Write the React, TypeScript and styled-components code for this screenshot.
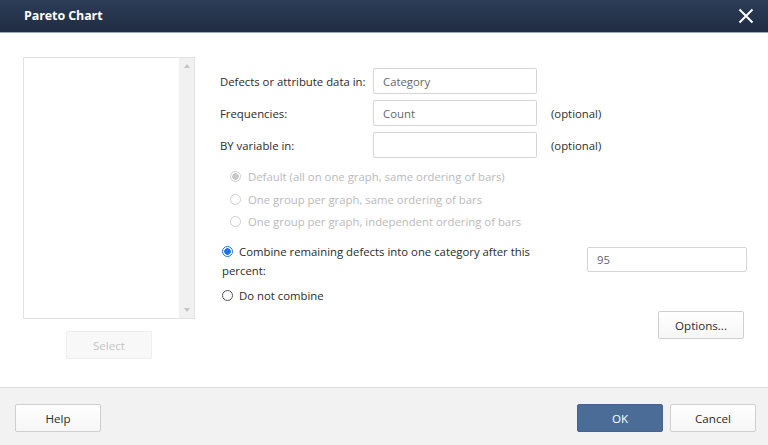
import React from "react";
import styled, { createGlobalStyle } from "styled-components";

const Global = createGlobalStyle`
  html, body { margin: 0; padding: 0; }
  body { font-family: "Open Sans", "Noto Sans", Arial, sans-serif; font-size: 11.35px; color: #2b2b2b; background: #fff; }
  * { box-sizing: border-box; }
`;

const Dialog = styled.div`
  width: 768px;
  height: 445px;
  display: flex;
  flex-direction: column;
  overflow: hidden;
`;

const Header = styled.div`
  height: 33px;
  flex: none;
  display: flex;
  align-items: center;
  justify-content: space-between;
  padding: 0 10px 1px 24px;
  background: linear-gradient(#2d3d58, #1f2c42);
  border-bottom: 1px solid #9ca7b9;
`;

const Title = styled.div`
  color: #fff;
  font-weight: 700;
  font-size: 12.5px;
  letter-spacing: -0.1px;
`;

const CloseButton = styled.button`
  width: 24px;
  height: 24px;
  padding: 0;
  border: none;
  background: transparent;
  display: flex;
  align-items: center;
  justify-content: center;
`;

const Body = styled.div`
  flex: 1;
  display: flex;
  padding: 24px 21px 0 23px;
  background: #fff;
`;

const LeftColumn = styled.div`
  width: 172px;
  flex: none;
  display: flex;
  flex-direction: column;
  align-items: center;
  gap: 12px;
`;

const ListBox = styled.div`
  width: 172px;
  height: 262px;
  border: 1px solid #e2e2e2;
  display: flex;
  justify-content: flex-end;
`;

const ScrollTrack = styled.div`
  width: 15px;
  height: 100%;
  background: #f1f1f1;
  display: flex;
  flex-direction: column;
  justify-content: space-between;
  align-items: center;
  padding: 6px 0;
`;

const Arrow = styled.div<{ $down?: boolean }>`
  width: 0;
  height: 0;
  border-left: 3.5px solid transparent;
  border-right: 3.5px solid transparent;
  ${(p) =>
    p.$down
      ? "border-top: 4px solid #c4c4c4;"
      : "border-bottom: 4px solid #c4c4c4;"}
`;

const Button = styled.button<{ $primary?: boolean; $disabled?: boolean }>`
  width: 86px;
  height: 28px;
  border-radius: 2px;
  font-family: inherit;
  font-size: 11.6px;
  border: 1px solid ${(p) => (p.$primary ? "#44648e" : p.$disabled ? "#eeeeee" : "#cfcfcf")};
  background: ${(p) =>
    p.$primary ? "#4a6c97" : p.$disabled ? "#f8f8f8" : "linear-gradient(#ffffff, #f6f6f6)"};
  color: ${(p) => (p.$primary ? "#fff" : p.$disabled ? "#c4c4c4" : "#2b2b2b")};
  padding: 0;
`;

const RightColumn = styled.div`
  flex: 1;
  margin-left: 25px;
  padding-top: 11px;
  display: flex;
  flex-direction: column;
`;

const FieldGrid = styled.div`
  display: grid;
  grid-template-columns: 153px 164px auto;
  row-gap: 6px;
  align-items: center;
`;

const Label = styled.label`
  white-space: nowrap;
`;

const Optional = styled.span`
  margin-left: 14px;
`;

const TextBox = styled.div<{ $width?: number }>`
  width: ${(p) => (p.$width ? `${p.$width}px` : "100%")};
  height: 26px;
  border: 1px solid #d5d5d5;
  border-radius: 2px;
  background: #fff;
  padding: 0 9px;
  display: flex;
  align-items: center;
  color: #666;
`;

const RadioGroup = styled.div`
  display: flex;
  flex-direction: column;
  padding-left: 10px;
  margin-top: 8px;
`;

const RadioRow = styled.div`
  line-height: 22.5px;
  color: #bababa;
  white-space: nowrap;
`;

const RadioDot = styled.span<{ $checked?: boolean; $disabled?: boolean }>`
  display: inline-block;
  width: 11px;
  height: 11px;
  border-radius: 50%;
  vertical-align: -1px;
  margin-right: ${(p) => (p.$disabled ? 7 : 6)}px;
  border: 1px solid ${(p) => (p.$disabled ? "#cfcfcf" : p.$checked ? "#1a73e8" : "#555")};
  background: ${(p) =>
    p.$checked
      ? p.$disabled
        ? "radial-gradient(circle, #c8c8c8 0 3px, #fff 3.5px)"
        : "radial-gradient(circle, #1a73e8 0 3px, #fff 3.5px)"
      : "#fff"};
`;

const CombineRow = styled.div`
  display: flex;
  justify-content: space-between;
  align-items: flex-start;
  margin-top: 8px;
  margin-left: 2px;
`;

const WrapText = styled.div`
  width: 330px;
  line-height: 19px;
`;

const PercentBox = styled(TextBox)`
  margin-top: 5.5px;
  height: 25px;
`;

const PlainRadio = styled.div`
  margin-top: 6px;
  margin-left: 2px;
  line-height: 19px;
`;

const OptionsRow = styled.div`
  display: flex;
  justify-content: flex-end;
  margin-top: 6.5px;
  padding-right: 3px;
`;

const Footer = styled.div`
  height: 58px;
  flex: none;
  background: #f2f2f2;
  border-top: 1px solid #dcdcdc;
  display: flex;
  align-items: flex-start;
  padding: 16px 12px 0 15px;
  gap: 7px;
`;

const Spacer = styled.div`
  flex: 1;
`;

export default function App() {
  return (
    <Dialog>
      <Global />
      <Header>
        <Title>Pareto Chart</Title>
        <CloseButton aria-label="Close">
          <svg width="16" height="16" viewBox="0 0 16 16">
            <path d="M1.5 1.5 L14.5 14.5 M14.5 1.5 L1.5 14.5" stroke="#fff" strokeWidth="2" />
          </svg>
        </CloseButton>
      </Header>
      <Body>
        <LeftColumn>
          <ListBox>
            <ScrollTrack>
              <Arrow />
              <Arrow $down />
            </ScrollTrack>
          </ListBox>
          <Button $disabled>Select</Button>
        </LeftColumn>
        <RightColumn>
          <FieldGrid>
            <Label>Defects or attribute data in:</Label>
            <TextBox>Category</TextBox>
            <span />
            <Label>Frequencies:</Label>
            <TextBox>Count</TextBox>
            <Optional>(optional)</Optional>
            <Label>BY variable in:</Label>
            <TextBox />
            <Optional>(optional)</Optional>
          </FieldGrid>
          <RadioGroup>
            <RadioRow>
              <RadioDot $checked $disabled />
              Default (all on one graph, same ordering of bars)
            </RadioRow>
            <RadioRow>
              <RadioDot $disabled />
              One group per graph, same ordering of bars
            </RadioRow>
            <RadioRow>
              <RadioDot $disabled />
              One group per graph, independent ordering of bars
            </RadioRow>
          </RadioGroup>
          <CombineRow>
            <WrapText>
              <RadioDot $checked />
              Combine remaining defects into one category after this percent:
            </WrapText>
            <PercentBox $width={160}>95</PercentBox>
          </CombineRow>
          <PlainRadio>
            <RadioDot />
            Do not combine
          </PlainRadio>
          <OptionsRow>
            <Button>Options...</Button>
          </OptionsRow>
        </RightColumn>
      </Body>
      <Footer>
        <Button>Help</Button>
        <Spacer />
        <Button $primary>OK</Button>
        <Button>Cancel</Button>
      </Footer>
    </Dialog>
  );
}
